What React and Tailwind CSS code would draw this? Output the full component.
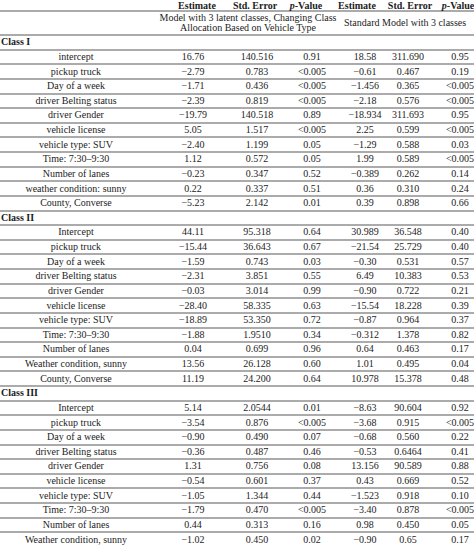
import React from "react";

const cols = "grid grid-cols-[152px_82px_46px_64px_42px_44px_60px]";
const headCols = "grid grid-cols-[152px_90px_26px_76px_26px_80px_16px]";
const line = "border-b-2 border-[#ababab]";

const classes = [
  {
    name: "Class I",
    rows: [
      ["intercept", "16.76", "140.516", "0.91", "18.58", "311.690", "0.95"],
      ["pickup truck", "−2.79", "0.783", "<0.005", "−0.61", "0.467", "0.19"],
      ["Day of a week", "−1.71", "0.436", "<0.005", "−1.456", "0.365", "<0.005"],
      ["driver Belting status", "−2.39", "0.819", "<0.005", "−2.18", "0.576", "<0.005"],
      ["driver Gender", "−19.79", "140.518", "0.89", "−18.934", "311.693", "0.95"],
      ["vehicle license", "5.05", "1.517", "<0.005", "2.25", "0.599", "<0.005"],
      ["vehicle type: SUV", "−2.40", "1.199", "0.05", "−1.29", "0.588", "0.03"],
      ["Time: 7:30–9:30", "1.12", "0.572", "0.05", "1.99", "0.589", "<0.005"],
      ["Number of lanes", "−0.23", "0.347", "0.52", "−0.389", "0.262", "0.14"],
      ["weather condition: sunny", "0.22", "0.337", "0.51", "0.36", "0.310", "0.24"],
      ["County, Converse", "−5.23", "2.142", "0.01", "0.39", "0.898", "0.66"],
    ],
  },
  {
    name: "Class II",
    rows: [
      ["Intercept", "44.11", "95.318", "0.64", "30.989", "36.548", "0.40"],
      ["pickup truck", "−15.44", "36.643", "0.67", "−21.54", "25.729", "0.40"],
      ["Day of a week", "−1.59", "0.743", "0.03", "−0.30", "0.531", "0.57"],
      ["driver Belting status", "−2.31", "3.851", "0.55", "6.49", "10.383", "0.53"],
      ["driver Gender", "−0.03", "3.014", "0.99", "−0.90", "0.722", "0.21"],
      ["vehicle license", "−28.40", "58.335", "0.63", "−15.54", "18.228", "0.39"],
      ["vehicle type: SUV", "−18.89", "53.350", "0.72", "−0.87", "0.964", "0.37"],
      ["Time: 7:30–9:30", "−1.88", "1.9510", "0.34", "−0.312", "1.378", "0.82"],
      ["Number of lanes", "0.04", "0.699", "0.96", "0.64", "0.463", "0.17"],
      ["Weather condition, sunny", "13.56", "26.128", "0.60", "1.01", "0.495", "0.04"],
      ["County, Converse", "11.19", "24.200", "0.64", "10.978", "15.378", "0.48"],
    ],
  },
  {
    name: "Class III",
    rows: [
      ["Intercept", "5.14", "2.0544", "0.01", "−8.63", "90.604", "0.92"],
      ["pickup truck", "−3.54", "0.876", "<0.005", "−3.68", "0.915", "<0.005"],
      ["Day of a week", "−0.90", "0.490", "0.07", "−0.68", "0.560", "0.22"],
      ["driver Belting status", "−0.36", "0.487", "0.46", "−0.53", "0.6464", "0.41"],
      ["driver Gender", "1.31", "0.756", "0.08", "13.156", "90.589", "0.88"],
      ["vehicle license", "−0.54", "0.601", "0.37", "0.43", "0.669", "0.52"],
      ["vehicle type: SUV", "−1.05", "1.344", "0.44", "−1.523", "0.918", "0.10"],
      ["Time: 7:30–9:30", "−1.79", "0.470", "<0.005", "−3.40", "0.878", "<0.005"],
      ["Number of lanes", "0.44", "0.313", "0.16", "0.98", "0.450", "0.05"],
      ["Weather condition, sunny", "−1.02", "0.450", "0.02", "−0.90", "0.65", "0.17"],
    ],
  },
];

const PValue = () => (
  <span className="whitespace-nowrap">
    <i>p</i>-Value
  </span>
);

export default function App() {
  return (
    <div className="w-[474px] h-[545px] overflow-hidden bg-white text-[#1c1c1c] font-['Liberation_Serif','DejaVu_Serif',serif] text-[10px] leading-none">
      <div className="w-[494px]">
        <div className={`${headCols} h-[12px] ${line} items-start justify-items-center font-bold pt-px`}>
          <span />
          <span>Estimate</span>
          <span className="whitespace-nowrap">Std. Error</span>
          <PValue />
          <span>Estimate</span>
          <span className="whitespace-nowrap">Std. Error</span>
          <PValue />
        </div>
        <div className={`${cols} h-[24px] ${line} items-center`}>
          <span />
          <span className="col-span-3 text-center leading-[10px] whitespace-nowrap">
            Model with 3 latent classes, Changing Class
            <br />
            Allocation Based on Vehicle Type
          </span>
          <span className="col-span-3 text-center pr-[32px] whitespace-nowrap">
            Standard Model with 3 classes
          </span>
        </div>
        {classes.map((c) => (
          <div key={c.name}>
            <div className={`h-[14.63px] ${line} flex items-center pl-px font-bold`}>
              {c.name}
            </div>
            {c.rows.map((r, i) => (
              <div
                key={i}
                className={`${cols} h-[14.63px] ${line} items-center justify-items-center`}
              >
                {r.map((v, j) => (
                  <span key={j} className="whitespace-nowrap">
                    {v}
                  </span>
                ))}
              </div>
            ))}
          </div>
        ))}
      </div>
    </div>
  );
}
